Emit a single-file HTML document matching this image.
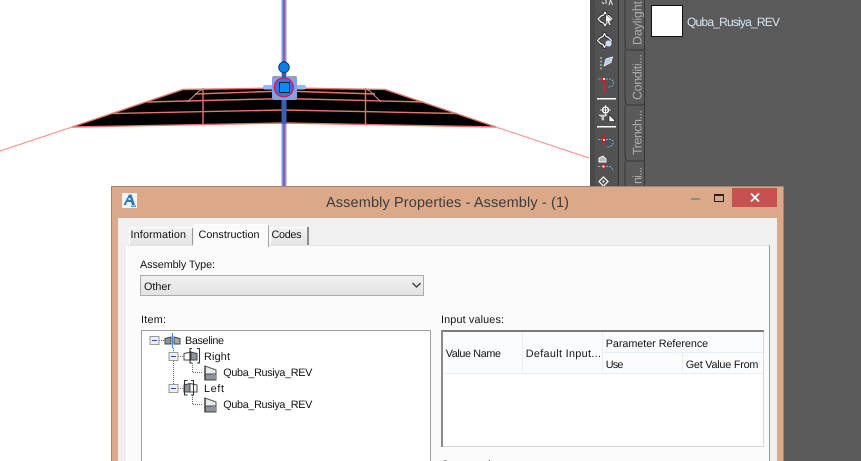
<!DOCTYPE html>
<html><head><meta charset="utf-8"><title>Assembly Properties</title>
<style>
html,body{margin:0;padding:0;width:861px;height:461px;overflow:hidden;background:#fff}
svg{display:block}
text{font-family:"Liberation Sans",sans-serif;font-size:10.8px;fill:#111;text-rendering:geometricPrecision}
.p{fill:none;stroke:#e8736b;stroke-width:1.4}
.c{shape-rendering:crispEdges}
.d{fill:none;stroke:#666;stroke-width:1;stroke-dasharray:1 1;shape-rendering:crispEdges}
.s{fill:#adadad;font-size:12.5px}
</style></head><body>
<svg width="861" height="461" viewBox="0 0 861 461" xmlns="http://www.w3.org/2000/svg">
<defs>
<linearGradient id="cb" x1="0" y1="0" x2="0" y2="1"><stop offset="0" stop-color="#f1f1f1"/><stop offset="1" stop-color="#e2e2e2"/></linearGradient>
<linearGradient id="tb" x1="0" y1="0" x2="0" y2="1"><stop offset="0" stop-color="#f2f2f2"/><stop offset="1" stop-color="#e4e4e4"/></linearGradient>
<g id="leaf">
<path d="M1 1L12 5V15H1Z" fill="#e8eaec" stroke="#555" stroke-width="1"/>
<path d="M1 9L12 10V15H1Z" fill="#8f949c"/>
<path d="M1 1V15" stroke="#333" stroke-width="1.4"/>
<path d="M1 9H12M1 15H12" stroke="#444" stroke-width="1"/>
</g>
<g id="exp">
<rect x="-4.5" y="-4" width="9" height="8" fill="#eee" stroke="#9a9a9a" class="c"/>
<path d="M-2.500 0H2.500" stroke="#2a55a8" stroke-width="1" class="c"/>
</g>
<g id="gz" fill="none" stroke-linejoin="round">
<path d="M0-7L1.500-4L4-3L7 0L4 3L1.500 4L0 7L-1.500 4L-4 3L-7 0L-4-3L-1.500-4Z" stroke="#111" stroke-width="2.600"/>
<path d="M0-7L1.500-4L4-3L7 0L4 3L1.500 4L0 7L-1.500 4L-4 3L-7 0L-4-3L-1.500-4Z" stroke="#fff" stroke-width="1.300"/>
</g>
</defs>

<!-- canvas -->
<rect width="861" height="461" fill="#fff"/>
<path d="M0 151L72 127M496 127L589 158" fill="none" stroke="#ff9a9a" stroke-width="1.200"/>
<path d="M72 127L183 89.500L284 88L385 89.500L496 127L284 123Z" fill="#000"/>
<path class="p" d="M72 127L183 89.500L284 88L385 89.500L496 127L284 123Z"/>
<path class="p" d="M195 94L284 91L375 94"/>
<path class="p" d="M147 102L284 98.500L423 102"/>
<path class="p" d="M113 113.500L284 110L457 113.500"/>
<path class="p" d="M203 88V124M365.500 88V124" stroke-width="1.200"/>
<path d="M187.500 102L199 91L203 89M381 102L370 91L365.500 89" fill="none" stroke="#e8908a" stroke-width="1"/>
<path d="M203 89l0 .1M365.500 89l0 .1" stroke="#c000c0" stroke-width="3"/>
<!-- axis -->
<rect x="281.500" y="0" width="5" height="186" fill="#7f9bea" class="c"/>
<rect x="283" y="0" width="2" height="186" fill="#9a5a9c" class="c"/>
<rect x="281.500" y="100" width="5" height="24" fill="#3e5fb0" class="c"/>
<rect x="263" y="85" width="43" height="4.500" fill="#9ab8f0" rx="2"/>
<rect x="272" y="76" width="25" height="24" fill="#7ea2f0" rx="2"/>
<path d="M273.500 79V76.800H277M291 76.800H295V80M273.500 96V99H277M291 99H295V96" fill="none" stroke="#b59a50" stroke-width="1"/>
<rect x="282" y="61" width="4" height="20" fill="#2f5fb0"/>
<circle cx="284" cy="67.300" r="5.300" fill="#0a7de8" stroke="#1c3a60"/>
<circle cx="283.800" cy="87.300" r="9.500" fill="#3a70e4" stroke="#ec1030" stroke-width="1.200"/>
<rect x="279.500" y="82.500" width="10" height="10" fill="#0a8cf6" stroke="#222" class="c"/>

<!-- right panel -->
<rect x="590" y="0" width="271" height="461" fill="#5a5a5a"/>
<rect x="590" y="0" width="5" height="461" fill="#4a4a4a" class="c"/>
<rect x="595" y="0" width="23" height="461" fill="#525252" class="c"/>
<rect x="618" y="0" width="1" height="461" fill="#333" class="c"/>
<!-- side tabs -->
<path d="M625 0V46Q625 49 628 50H644M625 50V100Q625 104 628 105H644M625 105V156Q625 160 628 161H644M625 161V190M644.500 0V190" fill="none" stroke="#363636"/>
<text class="s" transform="translate(641.500,45) rotate(-90)" textLength="44">Daylight</text>
<text class="s" transform="translate(641.500,100) rotate(-90)" textLength="46">Conditi...</text>
<text class="s" transform="translate(641.500,155) rotate(-90)" textLength="45">Trench...</text>
<text class="s" transform="translate(641.500,184) rotate(-90)" textLength="17">ni...</text>
<!-- toolbar icons -->
<path d="M606 0V4M602 2L604 4M609 5L610.500 0L612.500 5" fill="none" stroke="#eee" stroke-width="1"/>
<use href="#gz" x="605" y="19"/>
<path d="M606 14L612.500 20.500L609.500 21L611 25L609 25.500L607.500 21.500L605.500 23Z" fill="#f2f2f2" stroke="#222" stroke-width=".5"/>
<use href="#gz" x="604.500" y="40.500"/>
<circle cx="608.500" cy="43.500" r="3.300" fill="#cfdcec" stroke="#556" stroke-width=".5"/>
<path d="M601 57V70" stroke="#ddd" stroke-width="1" stroke-dasharray="2 1.500"/>
<path d="M604 66L606 59L612.500 57L611 62.500Z" fill="#b4cce8" stroke="#eef" stroke-width=".8"/>
<path d="M604 77.500V93" stroke="#f01818" stroke-width="1.500"/>
<path d="M598.500 79H602M606 79H610Q614 80 613.500 84Q612.500 87 608 87" fill="none" stroke="#7aa8e0" stroke-width="1" stroke-dasharray="2 1"/>
<rect x="602.500" y="77.500" width="3" height="3" fill="#fff" stroke="#e01010" class="c"/>
<rect x="597" y="98" width="19" height="1.600" fill="#fff" class="c"/>
<circle cx="605.500" cy="110" r="3" fill="none" stroke="#fff" stroke-width="1.300"/>
<path d="M605.500 105V115M600 110H611" stroke="#fff" stroke-width=".8"/>
<path d="M599 115H607L603.500 117V120H602V117Z" fill="#b8b8b8" stroke="#eee" stroke-width=".6"/>
<path d="M609 114.500L614.500 120V121.500H609Z" fill="#fff" stroke="#111" stroke-width=".6"/>
<rect x="597" y="126" width="19" height="1.600" fill="#fff" class="c"/>
<path d="M604 133V138M604 142V145" stroke="#f01818" stroke-width="1.200"/>
<path d="M598 139.500H602M606 139.500H611Q614 141 613 144Q611 147 607 147" fill="none" stroke="#7aa8e0" stroke-width="1" stroke-dasharray="2 1"/>
<rect x="602.500" y="138.500" width="3" height="3" fill="#fff" stroke="#e01010" class="c"/>
<path d="M599 162V158L603 156L606 159V162Z" fill="#b8b8b8" stroke="#fff" stroke-width=".9"/>
<path d="M598 166.500H602M606 166.500H610Q613 168 613 171" fill="none" stroke="#7aa8e0" stroke-width="1" stroke-dasharray="2 1"/>
<rect x="602" y="165" width="3" height="3" fill="#fff" stroke="#e01010" class="c"/>
<path d="M603.500 177L608 181.500L603.500 186L599 181.500Z" fill="none" stroke="#fff" stroke-width="1.200"/>
<circle cx="603.500" cy="181.500" r="1.200" fill="#ddd"/>
<!-- tile -->
<rect x="651.500" y="5.500" width="31" height="31" fill="#fff" stroke="#111" class="c"/>
<text x="687" y="26" textLength="93" style="fill:#d8e6f0;font-size:12px">Quba_Rusiya_REV</text>

<!-- dialog -->
<rect x="111" y="186" width="673" height="275" fill="#dba98a" class="c"/>
<path d="M111.500 461V186.500H783.500V461" fill="none" stroke="#a08672" class="c"/>
<rect x="122" y="193" width="15" height="15" fill="#f0f4f8" class="c"/>
<path d="M123.500 205L129 194.500H131.500L135 205H132L131 202H127L126 205Z" fill="#2a7ab8"/>
<rect x="128.500" y="198" width="2" height="2" fill="#f0f4f8"/>
<rect x="131" y="205.500" width="5" height="1.500" fill="#5a9ac8" class="c"/>
<text x="326" y="207" textLength="243" style="fill:#3c3c3c;font-size:14.500px">Assembly Properties - Assembly - (1)</text>
<rect x="691" y="198" width="9" height="2" fill="#9a8a7c" class="c"/>
<rect x="714.500" y="194.500" width="9" height="7" fill="none" stroke="#222" class="c"/>
<rect x="714" y="194" width="10" height="2" fill="#222" class="c"/>
<rect x="732" y="188" width="45" height="19" fill="#c75050" class="c"/>
<path d="M751 193.500L759 201.500M759 193.500L751 201.500" stroke="#fff" stroke-width="1.800"/>
<rect x="118" y="217" width="659" height="244" fill="#f0f0f0" class="c"/>
<rect x="118" y="217" width="659" height="1" fill="#c9ad9c" class="c"/>
<!-- tab page -->
<rect x="126" y="245" width="643" height="216" fill="#fbfbfb" class="c"/>
<path d="M126.500 461V245.500H769" fill="none" stroke="#fff" class="c"/>
<rect x="769" y="245" width="1" height="216" fill="#9c9c9c" class="c"/>
<rect x="127" y="245" width="642" height="1" fill="#e4e4e4" class="c"/>
<!-- tabs -->
<rect x="129" y="227" width="64" height="18" fill="url(#tb)" class="c"/>
<path d="M129.500 245V227.500H192.500V245" fill="none" stroke="#fff" class="c"/>
<rect x="192" y="228" width="1" height="17" fill="#9c9c9c" class="c"/>
<rect x="270" y="227" width="39" height="18" fill="url(#tb)" class="c"/>
<path d="M270.500 245V227.500H308" fill="none" stroke="#fff" class="c"/>
<rect x="307" y="227" width="2" height="18" fill="#8c8c8c" class="c"/>
<rect x="194" y="224" width="75" height="23" fill="#fbfbfb" class="c"/>
<path d="M194.500 247V224.500H268" fill="none" stroke="#fff" class="c"/>
<rect x="268" y="225" width="1" height="22" fill="#a5a5a5" class="c"/>
<text x="130.500" y="238" textLength="55.500">Information</text>
<text x="198.500" y="238" textLength="61">Construction</text>
<text x="271.500" y="238" textLength="30">Codes</text>
<!-- combo -->
<text x="140" y="268" textLength="75">Assembly Type:</text>
<rect x="140.500" y="275.500" width="283" height="20" fill="url(#cb)" stroke="#acacac" class="c"/>
<text x="144" y="290" textLength="27">Other</text>
<path d="M412.500 283L416.500 287L420.500 283" fill="none" stroke="#444" stroke-width="1.500"/>
<!-- tree -->
<text x="141" y="323" textLength="25">Item:</text>
<rect x="141.500" y="330.500" width="289" height="140" fill="#fff" stroke="#9aa0a6" class="c"/>
<path class="d" d="M159 340.500H165M173.500 348V352M173.500 361V384M178 356.500H184M178 388.500H184M192.500 363V372.500H203M192.500 395V404.500H203"/>
<use href="#exp" x="154.500" y="340.500"/>
<use href="#exp" x="173.500" y="356.500"/>
<use href="#exp" x="173.500" y="388.500"/>
<!-- baseline icon -->
<path d="M165 338.500L171 337V344H165Z" fill="#8f949c" stroke="#444"/>
<path d="M174 337L180 338.500V344H174Z" fill="#a5a9b0" stroke="#444"/>
<path d="M172.500 333V348" stroke="#3a86d8"/>
<!-- right icon -->
<path d="M184 353.500L191 352V360H184Z" fill="#fff" stroke="#444"/>
<path d="M191 352L197 353.500V360H191Z" fill="#8f949c" stroke="#444"/>
<path d="M192 348.500H190V363H192M197 348.500H199.500V363H197" fill="none" stroke="#333" stroke-width="1.100"/>
<!-- left icon -->
<path d="M184 385L190 383.500V392H184Z" fill="#8f949c" stroke="#444"/>
<path d="M190 383.500L197 385V392H190Z" fill="#fff" stroke="#444"/>
<path d="M187.500 380.500H184.500V395H187.500M191 380.500H193.500V395H191" fill="none" stroke="#333" stroke-width="1.100"/>
<text x="185" y="344" textLength="39">Baseline</text>
<text x="204" y="360" textLength="26">Right</text>
<text x="204" y="392" textLength="20">Left</text>
<use href="#leaf" x="204" y="365"/>
<use href="#leaf" x="204" y="397"/>
<text x="223.300" y="376" textLength="89">Quba_Rusiya_REV</text>
<text x="223.300" y="408" textLength="89">Quba_Rusiya_REV</text>
<!-- grid -->
<text x="441" y="323" textLength="63">Input values:</text>
<rect x="441" y="330" width="323" height="117" fill="#fff" class="c"/>
<rect x="443" y="332" width="320" height="41" fill="#fbfcfe" class="c"/>
<rect x="441" y="330" width="323" height="2" fill="#7a7a7a" class="c"/>
<rect x="441" y="330" width="2" height="117" fill="#8a8a8a" class="c"/>
<path d="M763.500 332V446.500H443" fill="none" stroke="#d8d8d8" class="c"/>
<path d="M443 373.500H763M602 352.500H763M522.500 332V373M602.500 332V373M682.500 353V373" fill="none" stroke="#e6eef8" class="c"/>
<text x="445.700" y="357" textLength="55.300">Value Name</text>
<text x="525.700" y="357" textLength="75.300">Default Input...</text>
<text x="605.700" y="347" textLength="102.500">Parameter Reference</text>
<text x="605.700" y="368" textLength="17.700">Use</text>
<text x="685.700" y="368" textLength="72.700">Get Value From</text>
<text x="441" y="468" textLength="70">Output values:</text>
</svg>
</body></html>
